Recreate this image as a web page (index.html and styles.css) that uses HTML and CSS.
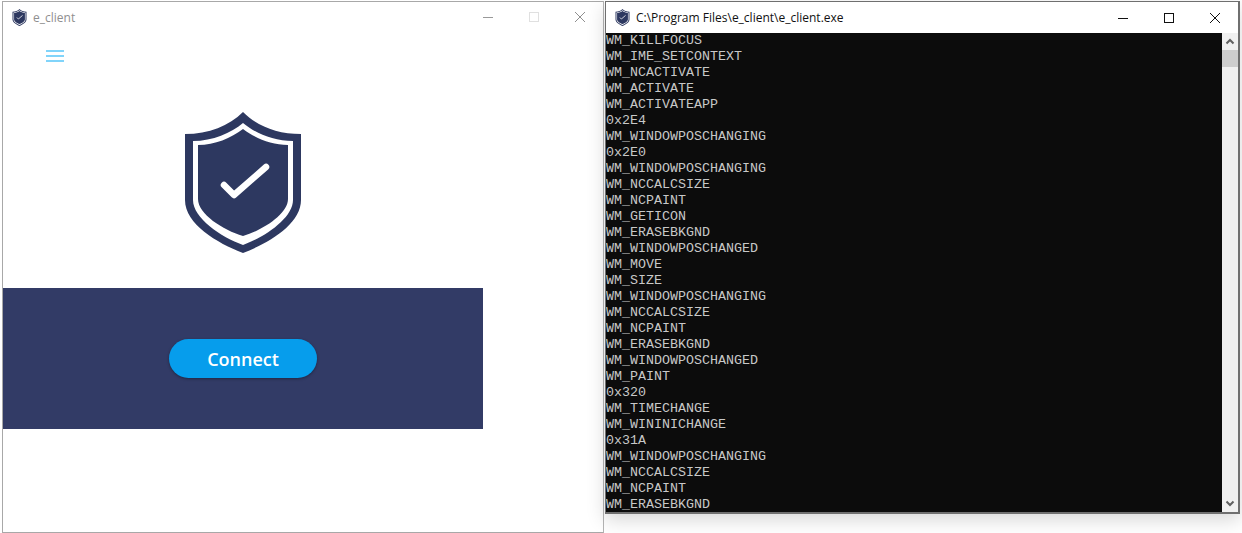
FILE: index.html
```html
<!DOCTYPE html>
<html lang="en">
<head>
<meta charset="utf-8">
<title>e_client</title>
<link rel="stylesheet" href="styles.css">
</head>
<body>
<svg class="defs" width="0" height="0" aria-hidden="true">
  <symbol id="shield" viewBox="0 0 116 141">
    <path fill="#2d3860" d="M58 0C72 14 92 22 116 22V88C116 112 84 131 58 141C32 131 0 112 0 88V22C24 22 44 14 58 0Z"/>
    <path fill="#fff" d="M58 11C70 21 88 29 108 29V88C108 106 80 125 58 133C36 125 8 106 8 88V29C28 29 46 21 58 11Z"/>
    <path fill="#2d3860" d="M58 17C70 26 86 33 103 33V87C103 102 78 118 58 124C38 118 13 102 13 87V33C30 33 46 26 58 17Z"/>
    <path fill="none" stroke="#fff" stroke-width="6.5" stroke-linecap="round" stroke-linejoin="round" d="M39 73L49 83L81 55"/>
  </symbol>
</svg>

<section class="window app">
  <header class="titlebar">
    <svg class="app-icon"><use href="#shield"/></svg>
    <span class="title muted">e_client</span>
    <div class="controls faded">
      <span class="ctl"><svg width="10" height="10"><path class="min" d="M0 5.5H10"/></svg></span>
      <span class="ctl"><svg width="10" height="10"><rect class="max" x=".5" y=".5" width="9" height="9"/></svg></span>
      <span class="ctl"><svg width="10" height="10"><path class="close" d="M0 0L10 10M10 0L0 10"/></svg></span>
    </div>
  </header>
  <div class="app-body">
    <button class="menu" aria-label="Menu"><i></i><i></i><i></i></button>
    <div class="hero"><svg class="hero-shield"><use href="#shield"/></svg></div>
    <div class="band"><button class="connect">Connect</button></div>
  </div>
</section>

<section class="window console">
  <header class="titlebar">
    <svg class="app-icon"><use href="#shield"/></svg>
    <span class="title">C:\Program Files\e_client\e_client.exe</span>
    <div class="controls">
      <span class="ctl"><svg width="10" height="10"><path class="min" d="M0 5.5H10"/></svg></span>
      <span class="ctl"><svg width="10" height="10"><rect class="max" x=".5" y=".5" width="9" height="9"/></svg></span>
      <span class="ctl"><svg width="10" height="10"><path class="close" d="M0 0L10 10M10 0L0 10"/></svg></span>
    </div>
  </header>
  <div class="console-body">
    <pre class="log">WM_KILLFOCUS
WM_IME_SETCONTEXT
WM_NCACTIVATE
WM_ACTIVATE
WM_ACTIVATEAPP
0x2E4
WM_WINDOWPOSCHANGING
0x2E0
WM_WINDOWPOSCHANGING
WM_NCCALCSIZE
WM_NCPAINT
WM_GETICON
WM_ERASEBKGND
WM_WINDOWPOSCHANGED
WM_MOVE
WM_SIZE
WM_WINDOWPOSCHANGING
WM_NCCALCSIZE
WM_NCPAINT
WM_ERASEBKGND
WM_WINDOWPOSCHANGED
WM_PAINT
0x320
WM_TIMECHANGE
WM_WININICHANGE
0x31A
WM_WINDOWPOSCHANGING
WM_NCCALCSIZE
WM_NCPAINT
WM_ERASEBKGND</pre>
    <div class="scrollbar">
      <svg class="arrow" width="16" height="16"><path d="M4.5 9.5L8 6L11.5 9.5"/></svg>
      <div class="thumb"></div>
      <svg class="arrow end" width="16" height="16"><path d="M4.5 6.5L8 10L11.5 6.5"/></svg>
    </div>
  </div>
</section>
</body>
</html>
```
FILE: styles.css
```css
* { box-sizing: border-box; }
html, body { margin: 0; height: 100%; overflow: hidden; }
body { position: relative; width: 1242px; height: 533px; background: #fff; font-family: "Open Sans", "Noto Sans", sans-serif; }
.defs { position: absolute; }

.window { position: absolute; display: flex; flex-direction: column; background: #fff; }
.app { left: 2px; top: 1px; width: 602px; height: 532px; border: 1px solid #a8a8a8; border-right-color: #b5b5b5; }
.console { left: 605px; top: 1px; width: 635px; height: 513px; border: 1px solid #6f6f6f; border-width: 1px 2px 2px 1px; box-shadow: 0 6px 18px rgba(0,0,0,.16); }

.titlebar { display: flex; align-items: center; height: 30px; padding-left: 9px; flex: none; background: #fff; }
.app-icon { width: 15px; height: 17px; flex: none; }
.title { margin-left: 6px; font-size: 12px; color: #111; }
.muted { color: #8f8f8f; }
.controls { display: flex; margin-left: auto; }
.ctl { display: flex; align-items: center; justify-content: center; width: 46px; height: 30px; }
.ctl svg { display: block; }
.min, .close { stroke: #111; fill: none; }
.max { stroke: #111; fill: none; }
.faded .min { stroke: #999; }
.faded .max { stroke: #e0e0e0; }
.faded .close { stroke: #8f8f8f; }

.app-body { flex: 1; display: flex; flex-direction: column; }
.menu { display: flex; flex-direction: column; gap: 3px; width: 18px; margin: 18px 0 0 43px; padding: 0; border: 0; background: none; }
.menu i { display: block; width: 18px; height: 2px; background: #81d4fa; }
.hero { width: 480px; padding-top: 50px; display: flex; justify-content: center; }
.hero-shield { width: 116px; height: 141px; display: block; }
.band { width: 480px; height: 141px; margin-top: 35px; display: flex; align-items: center; justify-content: center; background: #323b66; }
.connect { width: 148px; height: 39px; border: 0; border-radius: 20px; background: #069dec; color: #fff; font: 600 18px "Open Sans", "Noto Sans", sans-serif; box-shadow: 0 1px 3px rgba(0,0,0,.35); }

.console .titlebar { height: 31px; }
.console-body { flex: 1; display: flex; min-height: 0; }
.log { flex: 1; margin: 0; padding: 0 0 0 0; overflow: hidden; background: #0c0c0c; color: #c8c8c8; font: 13.33px/16px "Liberation Mono", monospace; }
.scrollbar { width: 16px; flex: none; display: flex; flex-direction: column; background: #f0f0f0; }
.arrow { display: block; flex: none; margin-top: 1px; }
.arrow path { fill: none; stroke: #606060; stroke-width: 2; }
.thumb { height: 17px; margin-top: 0; background: #cdcdcd; }
.arrow.end { margin-top: auto; margin-bottom: 1px; }
```
